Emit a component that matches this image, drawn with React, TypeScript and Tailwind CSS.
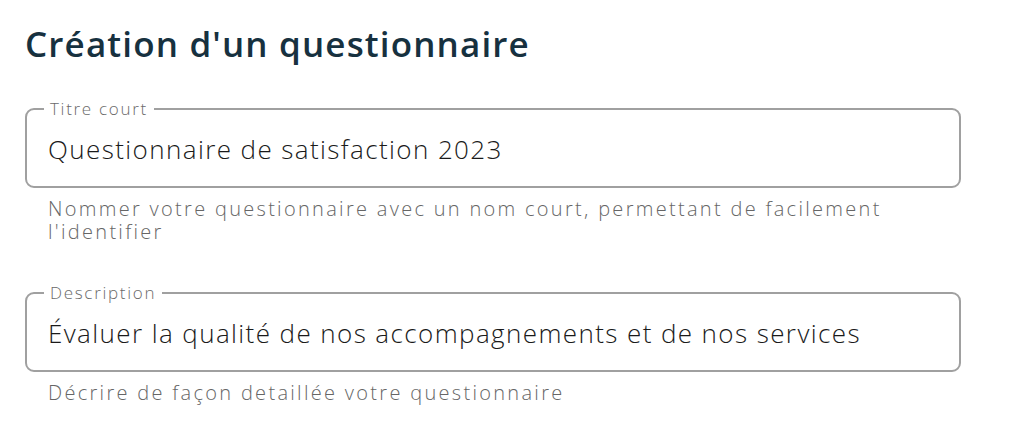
const font = { fontFamily: "'Open Sans', 'Noto Sans', sans-serif" };

function Field({ label, value, help }: { label: string; value: string; help: string }) {
  return (
    <div>
      <fieldset className="w-[936px] h-[89px] border-2 border-[#a0a0a0] rounded-[9px] pl-[17px] pr-4">
        <legend className="px-[6px] text-[17px] leading-[20px] font-light tracking-[1.7px] text-[#6a6a6a]">{label}</legend>
        <div className="ml-[4px] pt-[15px] text-[26px] leading-[30px] font-light tracking-[1.4px] text-[#1a1a1a]">{value}</div>
      </fieldset>
      <p className="mt-[9px] pl-[23px] w-[880px] text-[20px] leading-[23px] font-light tracking-[2.3px] text-[#666]">{help}</p>
    </div>
  );
}

export default function App() {
  return (
    <div className="bg-white w-[1032px] h-[444px] pl-[25px] pt-[22px]" style={font}>
      <h1 className="text-[35px] leading-[44px] font-semibold tracking-[1.15px] text-[#17313f]">Création d'un questionnaire</h1>
      <div className="mt-[33px] flex flex-col gap-[40px]">
        <Field
          label="Titre court"
          value="Questionnaire de satisfaction 2023"
          help="Nommer votre questionnaire avec un nom court, permettant de facilement l'identifier"
        />
        <Field
          label="Description"
          value="Évaluer la qualité de nos accompagnements et de nos services"
          help="Décrire de façon detaillée votre questionnaire"
        />
      </div>
    </div>
  );
}
